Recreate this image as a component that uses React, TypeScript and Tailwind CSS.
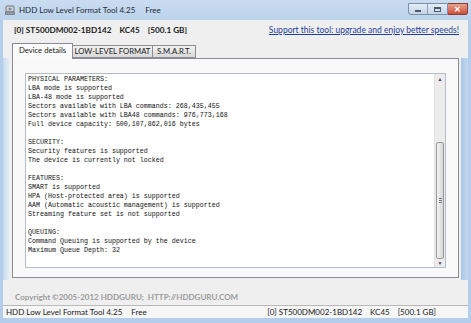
import React from 'react';

const lines: string[] = [
  'PHYSICAL PARAMETERS:',
  'LBA mode is supported',
  'LBA-48 mode is supported',
  'Sectors available with LBA commands: 268,435,455',
  'Sectors available with LBA48 commands: 976,773,168',
  'Full device capacity: 500,107,862,016 bytes',
  '',
  'SECURITY:',
  'Security features is supported',
  'The device is currently not locked',
  '',
  'FEATURES:',
  'SMART is supported',
  'HPA (Host-protected area) is supported',
  'AAM (Automatic acoustic management) is supported',
  'Streaming feature set is not supported',
  '',
  'QUEUING:',
  'Command Queuing is supported by the device',
  'Maximum Queue Depth: 32',
];

const DriveIcon: React.FC = () => (
  <svg width="10" height="10" viewBox="0 0 10 10">
    <rect x="1" y="1" width="8" height="6" rx="1" fill="#cfd3d8" stroke="#5a5f66" strokeWidth="0.8" />
    <circle cx="5" cy="4" r="1.6" fill="#8a9099" />
    <rect x="0.5" y="7" width="9" height="2.5" fill="#9aa1aa" stroke="#5a5f66" strokeWidth="0.6" />
  </svg>
);

const App: React.FC = () => {
  return (
    <div className="w-[471px] h-[323px] flex flex-col bg-[#b3cdea] overflow-hidden font-['Lato',sans-serif] text-black">
      {/* title bar */}
      <div className="h-[20px] flex items-center pl-[5px] pr-[3px] bg-gradient-to-b from-[#c9dcf0] to-[#bcd3ec]">
        <DriveIcon />
        <span className="ml-[4px] text-[8px] text-[#1e2a38]">HDD Low Level Format Tool 4.25</span>
        <span className="ml-[10px] text-[8px] text-[#1e2a38]">Free</span>
        <div className="ml-auto flex items-start self-start mt-[3px]">
          <div className="flex h-[12px] rounded-bl-[3px] border border-[#7b8fa8] bg-gradient-to-b from-[#e6eef7] to-[#c3d3e6]">
            <div className="w-[19px] flex items-center justify-center border-r border-[#8ea0b7]">
              <div className="w-[6px] h-[2px] mt-[4px] bg-[#4c5a6c]" />
            </div>
            <div className="w-[19px] flex items-center justify-center">
              <div className="w-[7px] h-[5px] border border-[#4c5a6c] border-t-2" />
            </div>
          </div>
          <div className="w-[20px] h-[12px] flex items-center justify-center rounded-br-[3px] border border-l-0 border-[#8a3a2e] bg-gradient-to-b from-[#e8a08e] to-[#c9503a] text-white text-[8px] font-bold leading-none">
            ✕
          </div>
        </div>
      </div>

      {/* client */}
      <div className="flex-1 mx-[3px] flex flex-col bg-[#efefef]">
        <div className="h-[20px] flex items-center pl-[11px] pr-[9px]">
          <div className="flex items-center gap-[8px] text-[8.2px] font-bold text-[#1a1a1a]">
            <span>[0] ST500DM002-1BD142</span>
            <span>KC45</span>
            <span>[500.1 GB]</span>
          </div>
          <a href="#" className="ml-auto text-[8.5px] text-[#1f3f9e] underline">
            Support this tool: upgrade and enjoy better speeds!
          </a>
        </div>

        {/* tabs */}
        <div className="mt-[3px] h-[16px] -mb-px pl-[9px] flex items-end relative z-10 text-[7.7px]">
          <div className="w-[61px] h-[16px] flex items-center justify-center border border-b-0 border-[#898c95] bg-[#fbfbfb] text-[#1a1a1a] pb-[1px]">
            Device details
          </div>
          <div className="w-[80px] h-[13px] mb-px flex items-center justify-center border border-l-0 border-[#8e8f8f] bg-gradient-to-b from-[#f2f2f2] to-[#d9d9d9] text-[#1a1a1a]">
            LOW-LEVEL FORMAT
          </div>
          <div className="w-[43px] h-[13px] mb-px flex items-center justify-center border border-l-0 border-[#8e8f8f] bg-gradient-to-b from-[#f2f2f2] to-[#d9d9d9] text-[#1a1a1a]">
            S.M.A.R.T.
          </div>
        </div>

        {/* panel row */}
        <div className="h-[222px] flex">
          <div className="w-[6px] bg-gradient-to-r from-[#c5daf0] to-[#e3ecf6]" />
          <div className="ml-[3px] w-[447px] h-[220px] self-start border border-[#898c95] bg-[#f9f9f9] pt-[14px] pl-[12px]">
            <div className="w-[421px] h-[195px] flex border border-[#b5bcc7] bg-white">
              <div className="flex-1 pl-[2px] pt-[1px] font-['Liberation_Mono',monospace] text-[6.67px] leading-[9px] text-[#111] whitespace-pre">
                {lines.map((l, i) => (
                  <div key={i} className="h-[9px]">{l}</div>
                ))}
              </div>
              {/* scrollbar */}
              <div className="w-[11px] flex flex-col bg-[#ececec] border-l border-[#e2e2e2]">
                <div className="h-[10px] flex items-center justify-center text-[5px] text-[#444] leading-none">▲</div>
                <div className="h-[58px]" />
                <div className="h-[117px] mx-[1px] rounded-[2px] border border-[#9a9a9a] bg-gradient-to-r from-[#f4f4f4] to-[#d6d6d6] flex items-start justify-center pt-[55px]">
                  <div className="flex flex-col gap-[1px]">
                    <div className="w-[3px] h-px bg-[#777]" />
                    <div className="w-[3px] h-px bg-[#777]" />
                    <div className="w-[3px] h-px bg-[#777]" />
                  </div>
                </div>
                <div className="flex-1 flex items-center justify-center text-[5px] text-[#444] leading-none">▼</div>
              </div>
            </div>
          </div>
          <div className="ml-[2px] flex-1 bg-gradient-to-r from-[#a9c6e6] to-[#c3d8ef]" />
        </div>

        {/* copyright */}
        <div className="h-[25px] flex items-center pl-[12px] pt-[9px] text-[8px] font-bold text-[#9b9b9b]">
          Copyright ©2005-2012 HDDGURU;&nbsp;&nbsp;HTTP://HDDGURU.COM
        </div>

        {/* status bar */}
        <div className="h-[13px] flex items-center px-[3px] border-t border-[#b9b9b9] bg-[#f6f6f6] text-[8px] text-[#1a1a1a]">
          <span>HDD Low Level Format Tool 4.25</span>
          <span className="ml-[9px]">Free</span>
          <div className="ml-auto flex items-center gap-[8px] mr-[29px]">
            <span>[0] ST500DM002-1BD142</span>
            <span>KC45</span>
            <span>[500.1 GB]</span>
          </div>
        </div>
      </div>
      <div className="h-[5px]" />
    </div>
  );
};

export default App;
